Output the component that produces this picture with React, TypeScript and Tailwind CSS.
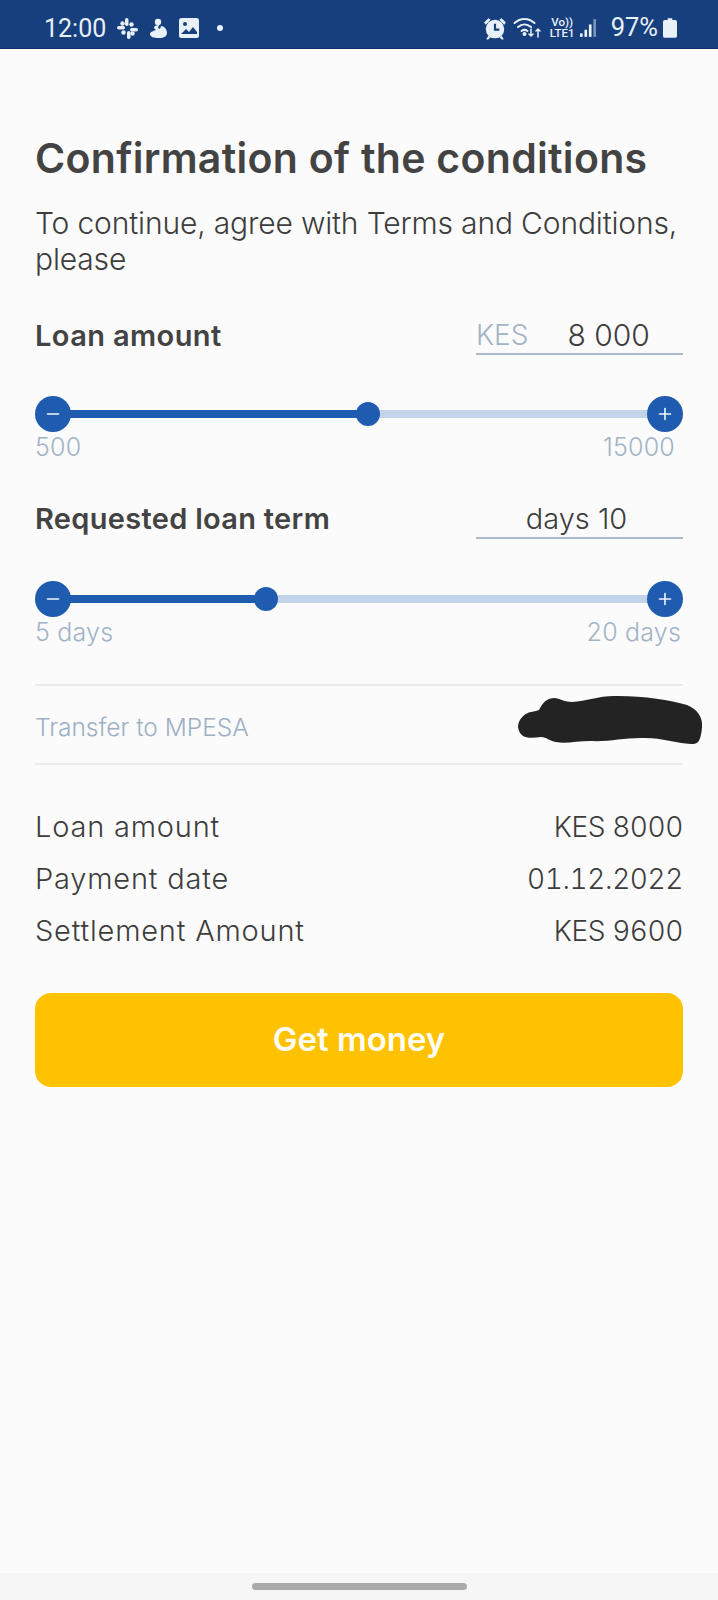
import React from "react";

function Knob({ kind }: { kind: "minus" | "plus" }) {
  return (
    <div className="relative z-10 flex h-[36px] w-[36px] shrink-0 items-center justify-center rounded-full bg-[#1f5bae]">
      <svg width="14" height="14" viewBox="0 0 14 14" fill="none" stroke="#f2f6fb" strokeWidth="1.6" strokeLinecap="round">
        <path d="M1.5 7h11" />
        {kind === "plus" && <path d="M7 1.5v11" />}
      </svg>
    </div>
  );
}

function Slider({ pct, min, max, maxPad }: { pct: number; min: string; max: string; maxPad: string }) {
  return (
    <div>
      <div className="relative flex h-[36px] items-center justify-between">
        <div className="absolute left-[18px] right-[18px] top-[14px] h-[8px] bg-[#c3d3e9]" />
        <div className="absolute left-[18px] top-[14px] h-[8px] bg-[#1f5bae]" style={{ width: pct }} />
        <div
          className="absolute top-[6px] z-10 h-[24px] w-[24px] rounded-full bg-[#1f5bae]"
          style={{ left: pct + 6 }}
        />
        <Knob kind="minus" />
        <Knob kind="plus" />
      </div>
      <div className={`mt-[1px] flex justify-between text-[25px] leading-[28px] font-light tracking-[0.2px] text-[#a3b3c6] ${maxPad}`}>
        <span>{min}</span>
        <span>{max}</span>
      </div>
    </div>
  );
}

function Row({ label, value }: { label: string; value: string }) {
  return (
    <div className="flex h-[52px] items-center justify-between text-[29px] font-light text-[#3d3d3d]">
      <span className="tracking-[0.8px]">{label}</span>
      <span className="text-[28px] tabular-nums tracking-[-0.4px]">{value}</span>
    </div>
  );
}

export default function App() {
  return (
    <div
      className="flex h-[1600px] w-[718px] flex-col overflow-hidden bg-[#fbfbfb]"
      style={{ fontFamily: '"Inter", "Open Sans", sans-serif' }}
    >
      <div
        className="flex h-[49px] shrink-0 items-center justify-between border-b border-[#0f2f66] bg-[#173f7d] pl-[44px] pr-[41px] pt-[8px] text-[#e8f0f8]"
        style={{ fontFamily: '"Roboto", sans-serif' }}
      >
        <div className="flex items-center">
          <span className="text-[25px] leading-none">12:00</span>
          <svg className="ml-[11px]" width="21" height="21" viewBox="0 0 21 21" fill="#e8f0f8">
            <rect x="0" y="8" width="8" height="3.500" rx="1.700" />
            <rect x="13" y="10" width="8" height="3.500" rx="1.700" />
            <rect x="8" y="0" width="3.500" height="8" rx="1.700" />
            <rect x="10" y="13" width="3.500" height="8" rx="1.700" />
            <circle cx="14.500" cy="6.500" r="2.200" />
            <circle cx="6.500" cy="14.500" r="2.200" />
            <circle cx="5.500" cy="5.500" r="2.200" />
            <circle cx="15.500" cy="15.500" r="2.200" />
          </svg>
          <svg className="ml-[11px]" width="19" height="21" viewBox="0 0 19 21" fill="#e8f0f8">
            <circle cx="9" cy="4" r="3.200" />
            <path d="M7 7.500c-3 1.500-2 3.500 0 4.500-3 1-6 2-6 4 0 3 4 4 9 4 5 0 8-2 8-5 0-4-3-7-6-7l-1 3-2-1 1-3z" />
          </svg>
          <svg className="ml-[11px]" width="20" height="20" viewBox="0 0 20 20">
            <rect width="20" height="20" rx="2.500" fill="#e8f0f8" />
            <circle cx="6" cy="6" r="2" fill="#173f7d" />
            <path d="M2 16l5-5 3 3 4-5 4 5v2H2z" fill="#173f7d" />
          </svg>
          <div className="ml-[18px] h-[6px] w-[6px] rounded-full bg-[#e8f0f8]" />
        </div>
        <div className="flex items-center">
          <svg width="24" height="24" viewBox="0 0 22 22" fill="#e8f0f8">
            <circle cx="11" cy="12" r="8.500" />
            <path d="M1 6l4-4 2 1.500L2.500 8zM21 6l-4-4-2 1.500L19.500 8zM5 18l-2 3 1.500.8L7 19.500zM17 18l2 3-1.500.8L15 19.500z" />
            <path d="M11 7v5.500h4" stroke="#173f7d" strokeWidth="2" fill="none" />
          </svg>
          <svg className="ml-[6px]" width="30" height="24" viewBox="0 0 30 24" fill="none" stroke="#e8f0f8" strokeWidth="2" strokeLinecap="round">
            <path d="M1.500 7c6-5.500 14-5.500 20 0" />
            <path d="M5 11c4-3.500 9-3.500 13 0" />
            <path d="M8.500 15c2-1.500 4-1.500 6 0" />
            <circle cx="11.500" cy="18" r="1" fill="#e8f0f8" />
            <path d="M18 13v7M16 18l2 2 2-2M25 21v-8M23 15l2-2 2 2" strokeWidth="1.500" />
          </svg>
          <div className="ml-[6px] flex w-[27px] flex-col items-center text-[11.500px] font-medium leading-[11px]">
            <span>Vo))</span>
            <span>LTE1</span>
          </div>
          <svg className="ml-[4px]" width="16" height="22" viewBox="0 0 18 22" fill="#e8f0f8">
            <rect x="0" y="17" width="3" height="4" rx="1" />
            <rect x="5" y="13" width="3" height="8" />
            <rect x="10" y="7" width="3" height="14" />
            <rect x="15" y="1" width="3" height="20" fill="#7d93b5" />
          </svg>
          <span className="ml-[15px] text-[25.500px] leading-none">97%</span>
          <svg className="ml-[5px]" width="14" height="22" viewBox="0 0 15 21" fill="#e8f0f8">
            <path d="M5 0h5v2h3a2 2 0 0 1 2 2v15a2 2 0 0 1-2 2H2a2 2 0 0 1-2-2V4a2 2 0 0 1 2-2h3z" />
          </svg>
        </div>
      </div>

      <div className="flex flex-1 flex-col px-[35px] pt-[84px]">
        <h1 className="text-[41px] font-semibold leading-[50px] tracking-[0.3px] text-[#434343]">Confirmation of the conditions</h1>
        <p className="mt-[22px] text-[30px] font-light leading-[36px] tracking-[-0.15px] text-[#3d3d3d]">
          To continue, agree with Terms and Conditions, please
        </p>

        <div className="mt-[39px] flex h-[39px] items-center justify-between">
          <span className="text-[29px] font-semibold leading-[36px] tracking-[0.4px] text-[#434343]">Loan amount</span>
          <div className="flex h-[39px] w-[207px] items-center border-b-2 border-[#a9b8ca] font-light leading-none">
            <span className="text-[28px] text-[#a3b3c6]">KES</span>
            <span className="ml-[39px] text-[30px] text-[#3d3d3d]">8 000</span>
          </div>
        </div>
        <div className="mt-[41px]">
          <Slider pct={315} min="500" max="15000" maxPad="pr-[8px]" />
        </div>

        <div className="mt-[38px] flex h-[40px] items-center justify-between">
          <span className="text-[29px] font-semibold leading-[36px] tracking-[0.3px] text-[#434343]">Requested loan term</span>
          <div className="flex h-[40px] w-[207px] items-center justify-center border-b-2 border-[#a9b8ca] pr-[6px] text-[29px] font-light leading-none text-[#3d3d3d]">
            days 10
          </div>
        </div>
        <div className="mt-[42px]">
          <Slider pct={213} min="5 days" max="20 days" maxPad="pr-[2px]" />
        </div>

        <div className="relative mt-[38px] flex h-[81px] items-center border-y-2 border-[#ececec] pt-[6px] text-[24.500px] font-light text-[#9db0c6]">
          Transfer to MPESA
          <svg className="absolute left-[480px] top-[7px]" width="190" height="54" viewBox="0 0 190 54" fill="#232323">
            <path d="M3 34C3 26 10 20 16 19C20 18 22 18 24 17C28 9 32 5 40 5C46 6 50 9 57 9C72 8 86 2 103 3C130 3 155 7 172 12C182 16 188 24 187 34C186 46 184 52 176 51C160 50 145 44 126 45C108 45 92 49 76 48C62 48 50 51 41 49C34 48 32 44 26 44C16 45 5 47 3 34Z" />
          </svg>
        </div>

        <div className="mt-[36px]">
          <Row label="Loan amount" value="KES 8000" />
          <Row label="Payment date" value="01.12.2022" />
          <Row label="Settlement Amount" value="KES 9600" />
        </div>

        <button className="mt-[36px] flex h-[94px] items-center justify-center rounded-[16px] bg-[#ffc200] text-[33px] font-semibold text-[#fdfdf6]">
          Get money
        </button>
      </div>

      <div className="flex h-[27px] shrink-0 items-start justify-center bg-[#f6f6f6] pt-[10px]">
        <div className="h-[7px] w-[215px] rounded-full bg-[#aaaaaa]" />
      </div>
    </div>
  );
}
